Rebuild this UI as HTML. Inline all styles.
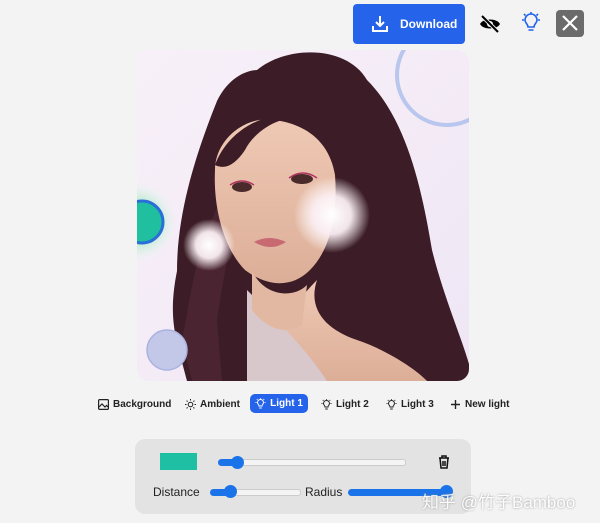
<!DOCTYPE html>
<html><head><style>
body{margin:0;width:600px;height:523px;background:#f3f3f3;font-family:"Liberation Sans",sans-serif;position:relative;overflow:hidden}
.dl{position:absolute;left:353px;top:4px;width:112px;height:40px;background:#2563eb;border-radius:4px;color:#fff;font-size:12px;font-weight:bold}
.x{position:absolute;left:556px;top:10px;width:28px;height:27px;background:#6b6b6b;border-radius:4px}
.img{position:absolute;left:137px;top:50px;width:332px;height:331px;border-radius:12px;overflow:hidden}
.tabs{position:absolute;top:395px;left:0;width:600px;font-size:10px;font-weight:bold;color:#222}
.tab{position:absolute;top:0;height:18px;line-height:17px;display:flex;align-items:center;gap:4px}
.panel{position:absolute;left:135px;top:439px;width:336px;height:75px;background:#e3e3e3;border-radius:10px}
.track{position:absolute;height:5px;background:#f4f4f4;border:1px solid #ccc;border-radius:3px}
.fill{position:absolute;height:7px;background:#1a73e8;border-radius:4px}
.thumb{position:absolute;width:13px;height:13px;background:#1a73e8;border-radius:50%}
.lbl{position:absolute;font-size:12px;color:#222}
</style></head><body>
<div class="dl"><svg style="position:absolute;left:18px;top:11px" width="18" height="18" viewBox="0 0 18 18" fill="none" stroke="#fff" stroke-width="2"><path d="M9 1v10M5 7l4 4 4-4M2 11v5h14v-5"/></svg><span style="position:absolute;left:47px;top:13px">Download</span></div>
<svg style="position:absolute;left:479px;top:14px" width="22" height="20" viewBox="0 0 22 20"><path d="M1 10c3-6 17-6 20 0c-3 6-17 6-20 0z" fill="#000"/><circle cx="11" cy="10" r="3" fill="#fff"/><path d="M3 2l16 16" stroke="#f3f3f3" stroke-width="4"/><path d="M3 2l16 16" stroke="#000" stroke-width="2"/></svg>
<svg style="position:absolute;left:520px;top:12px" width="22" height="22" viewBox="0 0 22 22" fill="none" stroke="#2563eb" stroke-width="1.6"><path d="M8 15c0-3-3-4-3-7a6 6 0 0112 0c0 3-3 4-3 7zM8.5 18h5"/><path d="M11 0v2M2 8h2M18 8h2M4 2l1.5 1.5M18 2l-1.5 1.5"/></svg>
<div class="x"><svg width="28" height="27" viewBox="0 0 28 27" stroke="#fff" stroke-width="2.2"><path d="M7 6l14 14M21 6L7 20"/></svg></div>
<div class="img"><svg width="332" height="331" viewBox="0 0 332 331">
<defs><linearGradient id="bg" x1="0" y1="0" x2="1" y2="1"><stop offset="0" stop-color="#f8f0f8"/><stop offset="1" stop-color="#efe6f5"/></linearGradient>
<radialGradient id="gl"><stop offset="0" stop-color="#fff"/><stop offset=".5" stop-color="#fbeff4" stop-opacity=".95"/><stop offset="1" stop-color="#fff" stop-opacity="0"/></radialGradient>
<radialGradient id="tg"><stop offset=".4" stop-color="#9ee8c0"/><stop offset="1" stop-color="#e6f8ee" stop-opacity="0"/></radialGradient>
<linearGradient id="sk" x1="0" y1="0" x2="0" y2="1"><stop offset="0" stop-color="#efc9b4"/><stop offset="1" stop-color="#dcae98"/></linearGradient></defs>
<rect width="332" height="331" fill="url(#bg)"/>
<circle cx="0" cy="172" r="40" fill="url(#tg)"/>
<circle cx="310" cy="25" r="50" fill="none" stroke="#b9c6ee" stroke-width="4"/>
<path d="M120 20c30-25 90-25 110 10c40 40 55 110 65 170c15 60 40 110 40 131H50c-10-40-20-60-10-110c0-60 20-120 40-170c10-20 25-30 40-31z" fill="#3c1c26"/>
<path d="M85 150c-25 40-30 90-40 140l10 41h30l-5-60c5-40 15-80 20-120z" fill="#4a2430"/>
<path d="M180 230c-10 30 10 50 40 60c30 10 60 30 70 41H120c10-40 30-70 60-101z" fill="url(#sk)"/>
<path d="M110 240c30 30 60 60 80 91H110z" fill="#d8c8cc"/>
<path d="M78 120c0-30 30-55 60-50c35 5 55 25 60 55c3 40-5 75-25 95c-20 20-45 15-65 0c-20-20-32-60-30-100z" fill="url(#sk)"/>
<path d="M115 220c10 25 40 30 55 15l-5 40c-15 10-35 5-50-15z" fill="#e3b8a2"/>
<path d="M78 115c15-40 60-60 100-45c-30-10-60 10-70 30c-10 15-20 20-30 15z" fill="#3c1c26"/>
<ellipse cx="105" cy="137" rx="10" ry="5" fill="#4a2a2a"/><ellipse cx="165" cy="129" rx="11" ry="5" fill="#4a2a2a"/>
<path d="M93 135q12-8 24 0M152 128q14-10 28 0" stroke="#b03060" stroke-width="1.5" fill="none"/>
<path d="M117 192q15-8 32 0q-15 10-32 0z" fill="#c86a72"/>
<circle cx="72" cy="195" r="26" fill="url(#gl)"/>
<circle cx="195" cy="165" r="38" fill="url(#gl)"/>
<circle cx="5" cy="172" r="21" fill="#1fbf9f" stroke="#2a6fd8" stroke-width="3"/>
<circle cx="30" cy="300" r="20" fill="#c3c8e8" stroke="#aab2e0" stroke-width="1.5"/>
</svg></div>
<div class="tabs">
<div class="tab" style="left:98px"><svg width="11" height="11" viewBox="0 0 11 11" fill="none" stroke="#222" stroke-width="1.2"><rect x=".6" y=".6" width="9.8" height="9.8" rx="1"/><path d="M1 8l3-3 3 3 1.5-1.5L10 8"/></svg>Background</div>
<div class="tab" style="left:185px"><svg width="11" height="11" viewBox="0 0 11 11" fill="none" stroke="#222" stroke-width="1"><circle cx="5.5" cy="5.5" r="2.3"/><path d="M5.5 0v1.5M5.5 9.5V11M0 5.5h1.5M9.5 5.5H11M1.6 1.6l1 1M8.4 8.4l1 1M1.6 9.4l1-1M8.4 2.6l1-1"/></svg>Ambient</div>
<div class="tab" style="left:250px;width:58px;background:#2563eb;color:#fff;border-radius:5px;justify-content:center;top:-1px;height:19px"><svg width="11" height="11" viewBox="0 0 11 11" fill="none" stroke="#fff" stroke-width="1"><path d="M4 8c0-1.5-1.5-2-1.5-3.5a3 3 0 016 0C8.5 6 7 6.5 7 8zM4.2 10h2.6M5.5 0v.8M0.5 4.5h1M9.5 4.5h1M1.8 1l.7.7M9.2 1l-.7.7"/></svg>Light 1</div>
<div class="tab" style="left:321px"><svg width="11" height="11" viewBox="0 0 11 11" fill="none" stroke="#222" stroke-width="1"><path d="M4 8c0-1.5-1.5-2-1.5-3.5a3 3 0 016 0C8.5 6 7 6.5 7 8zM4.2 10h2.6M5.5 0v.8M0.5 4.5h1M9.5 4.5h1M1.8 1l.7.7M9.2 1l-.7.7"/></svg>Light 2</div>
<div class="tab" style="left:386px"><svg width="11" height="11" viewBox="0 0 11 11" fill="none" stroke="#222" stroke-width="1"><path d="M4 8c0-1.5-1.5-2-1.5-3.5a3 3 0 016 0C8.5 6 7 6.5 7 8zM4.2 10h2.6M5.5 0v.8M0.5 4.5h1M9.5 4.5h1M1.8 1l.7.7M9.2 1l-.7.7"/></svg>Light 3</div>
<div class="tab" style="left:450px"><svg width="11" height="11" viewBox="0 0 11 11" stroke="#222" stroke-width="1.4"><path d="M5.5 1v9M1 5.5h9"/></svg>New light</div>
</div>
<div class="panel">
<div style="position:absolute;left:25px;top:14px;width:37px;height:17px;background:#1fbfa4"></div>
<div class="track" style="left:83px;top:20px;width:186px"></div>
<div class="fill" style="left:83px;top:20px;width:25px"></div><div class="thumb" style="left:96px;top:17px"></div>
<svg style="position:absolute;left:303px;top:16px" width="12" height="14" viewBox="0 0 12 14" fill="none" stroke="#111" stroke-width="1.5"><path d="M1 3h10M4 3V1h4v2M2 3l1 10h6l1-10M5 6v5M7 6v5"/></svg>
<div class="lbl" style="left:18px;top:46px">Distance</div>
<div class="track" style="left:75px;top:50px;width:89px"></div>
<div class="fill" style="left:75px;top:50px;width:22px"></div><div class="thumb" style="left:89px;top:46px"></div>
<div class="lbl" style="left:170px;top:46px">Radius</div>
<div class="fill" style="left:213px;top:50px;width:100px"></div><div class="thumb" style="left:305px;top:46px"></div>
</div>
<div style="position:absolute;left:422px;top:488px;font-size:17px;color:#fff;opacity:.85;font-family:'Liberation Sans','Noto Sans CJK SC',sans-serif;text-shadow:0 0 2px #888">知乎 @竹子Bamboo</div>
</body></html>
